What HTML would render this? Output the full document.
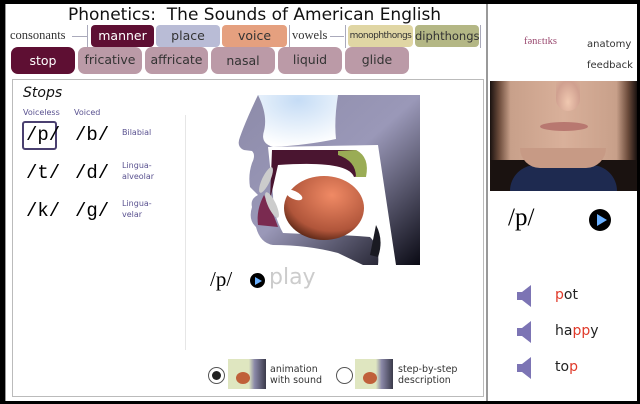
<!DOCTYPE html>
<html><head><style>
*{margin:0;padding:0;box-sizing:border-box}
body{width:640px;height:404px;background:#000;position:relative;overflow:hidden;font-family:"DejaVu Sans","Liberation Sans",sans-serif}
.a{position:absolute}
.btn{position:absolute;height:22px;border-radius:4px;text-align:center;line-height:22px;font-size:12.5px;color:#333}
.mono{font-family:"Liberation Mono",monospace}
.lab{font-size:8px;color:#5a5290;line-height:11px}
</style></head><body>
<div class="a" style="left:5px;top:4px;width:481px;height:397px;background:#fff;border-left:1px solid #999"></div>
<div class="a" style="left:486px;top:4px;width:2px;height:397px;background:#999"></div>
<div class="a" style="left:488px;top:4px;width:149px;height:397px;background:#fff"></div>
<div class="a" style="left:68px;top:5px;font-size:17px;color:#111;white-space:nowrap">Phonetics:&nbsp; The Sounds of American English</div>
<div class="a" style="left:10px;top:28px;font-family:'Liberation Serif',serif;font-size:12.5px;color:#333">consonants</div>
<div class="a" style="left:72px;top:36px;width:15px;height:1px;background:#aab"></div>
<div class="a" style="left:87px;top:25px;width:203px;height:23px;border:1px solid #aab;border-top:none;border-bottom:none"></div>
<div class="btn" style="left:91px;top:25px;width:63px;background:#5e0f33;color:#fff">manner</div>
<div class="btn" style="left:156px;top:25px;width:64px;background:#b9bcd6">place</div>
<div class="btn" style="left:222px;top:25px;width:65px;background:#e5a07f">voice</div>
<div class="a" style="left:292px;top:28px;font-family:'Liberation Serif',serif;font-size:12.5px;color:#333">vowels</div>
<div class="a" style="left:330px;top:36px;width:14px;height:1px;background:#aab"></div>
<div class="a" style="left:345px;top:25px;width:136px;height:23px;border:1px solid #aab;border-top:none;border-bottom:none"></div>
<div class="btn" style="left:348px;top:25px;width:65px;background:#e0d6a4;font-size:9px;letter-spacing:-.5px">monophthongs</div>
<div class="btn" style="left:415px;top:25px;width:64px;background:#b4b785;font-size:11.5px">diphthongs</div>
<div class="btn" style="left:11px;top:47px;width:64px;height:27px;line-height:27px;background:#5e0f33;color:#fff;border-radius:7px">stop</div>
<div class="btn" style="left:78px;top:47px;width:64px;height:27px;line-height:25px;background:#bb9aa7;border-radius:7px">fricative</div>
<div class="btn" style="left:145px;top:47px;width:63px;height:27px;line-height:25px;background:#bb9aa7;border-radius:7px">affricate</div>
<div class="btn" style="left:211px;top:47px;width:64px;height:27px;line-height:27px;background:#bb9aa7;border-radius:7px">nasal</div>
<div class="btn" style="left:278px;top:47px;width:64px;height:27px;line-height:25px;background:#bb9aa7;border-radius:7px">liquid</div>
<div class="btn" style="left:345px;top:47px;width:64px;height:27px;line-height:25px;background:#bb9aa7;border-radius:7px">glide</div>
<div class="a" style="left:12px;top:79px;width:472px;height:318px;border:1px solid #bbb"></div>
<div class="a" style="left:185px;top:115px;width:1px;height:235px;background:#e6e6e6"></div>
<div class="a" style="left:23px;top:85px;font-size:14px;font-style:italic;color:#111">Stops</div>
<div class="a lab" style="left:23px;top:107px">Voiceless</div>
<div class="a lab" style="left:74px;top:107px">Voiced</div>
<div class="a" style="left:22px;top:121px;width:35px;height:29px;border:2px solid #4a4070;border-radius:3px"></div>
<div class="a mono" style="left:26px;top:124px;font-size:19px">/p/</div>
<div class="a mono" style="left:75px;top:124px;font-size:19px">/b/</div>
<div class="a lab" style="left:122px;top:127px">Bilabial</div>
<div class="a mono" style="left:26px;top:162px;font-size:19px">/t/</div>
<div class="a mono" style="left:75px;top:162px;font-size:19px">/d/</div>
<div class="a lab" style="left:122px;top:160px">Lingua-<br>alveolar</div>
<div class="a mono" style="left:26px;top:200px;font-size:19px">/k/</div>
<div class="a mono" style="left:75px;top:200px;font-size:19px">/g/</div>
<div class="a lab" style="left:122px;top:198px">Lingua-<br>velar</div>
<svg class="a" style="left:228px;top:95px" width="192" height="170" viewBox="0 0 192 170">
<defs><linearGradient id="g1" x1="0" y1="0" x2="1" y2="1"><stop offset="0" stop-color="#8c8aa8"/><stop offset=".5" stop-color="#9a98b8"/><stop offset="1" stop-color="#0a0a14"/></linearGradient>
<radialGradient id="g2" cx=".6" cy=".3" r=".8"><stop offset="0" stop-color="#f08a65"/><stop offset=".7" stop-color="#b0553a"/><stop offset="1" stop-color="#3a1508"/></radialGradient>
<radialGradient id="g3" cx=".5" cy=".1" r=".9"><stop offset="0" stop-color="#c5dcf5"/><stop offset="1" stop-color="#fff"/></radialGradient></defs>
<rect width="192" height="170" fill="url(#g1)"/>
<path d="M0,0 L30,0 Q18,25 12,42 Q8,52 16,55 L24,56 Q28,60 24,68 Q20,80 22,92 L30,100 Q22,104 24,112 Q20,125 28,132 Q32,148 45,150 Q80,150 110,158 L135,170 L0,170 Z" fill="#fff"/>
<path d="M30,0 L110,0 Q106,25 108,44 Q80,50 45,52 Q32,48 36,36 Q40,20 30,0 Z" fill="url(#g3)"/>
<path d="M40,52 L150,50 L168,170 L150,170 Q152,152 142,142 Q120,140 100,140 L55,138 Q45,120 45,100 Z" fill="#fff"/>
<path d="M44,55 L128,55 Q140,62 138,80 L126,82 Q120,65 50,70 L42,105 Z" fill="#4a1530"/>
<path d="M110,56 L128,55 Q142,62 138,82 L128,82 Q128,66 110,60 Z" fill="#9aac55"/>
<ellipse cx="96" cy="113" rx="40" ry="32" fill="url(#g2)"/>
<path d="M30,130 Q28,115 36,100 Q46,120 50,132 Z" fill="#7a2a50"/>
<ellipse cx="38" cy="85" rx="4" ry="14" fill="#ccc" transform="rotate(25 38 85)"/>
<ellipse cx="44" cy="110" rx="4" ry="14" fill="#ccc" transform="rotate(-25 44 110)"/>
<ellipse cx="66" cy="100" rx="9" ry="4" fill="#fff" transform="rotate(25 66 100)"/>
<path d="M148,130 Q156,145 150,162 L142,160 Z" fill="#1a1a22"/>
</svg>
<div class="a" style="left:210px;top:267px;font-family:'Liberation Serif',serif;font-size:21px">/p/</div>
<div class="a" style="left:250px;top:273px;width:15px;height:15px;border-radius:50%;background:#000"></div>
<div class="a" style="left:255px;top:277px;width:0;height:0;border-left:7px solid #6ab0ff;border-top:4px solid transparent;border-bottom:4px solid transparent"></div>
<div class="a" style="left:269px;top:265px;font-size:22px;color:#ccc">play</div>
<div class="a" style="left:208px;top:367px;width:17px;height:17px;border-radius:50%;border:1px solid #555;background:#fff"></div>
<div class="a" style="left:212px;top:371px;width:9px;height:9px;border-radius:50%;background:#222"></div>
<div class="a" style="left:228px;top:359px;width:38px;height:30px;background:linear-gradient(90deg,#dfe6c0 55%,#8a88a8 70%,#3a3a4a)"></div>
<div class="a" style="left:236px;top:372px;width:14px;height:12px;border-radius:50%;background:#c0603a"></div>
<div class="a" style="left:270px;top:364px;font-size:9.5px;line-height:11px;color:#333">animation<br>with sound</div>
<div class="a" style="left:336px;top:367px;width:17px;height:17px;border-radius:50%;border:1px solid #555;background:#fff"></div>
<div class="a" style="left:355px;top:359px;width:38px;height:30px;background:linear-gradient(90deg,#dfe6c0 55%,#8a88a8 70%,#3a3a4a)"></div>
<div class="a" style="left:363px;top:372px;width:14px;height:12px;border-radius:50%;background:#c0603a"></div>
<div class="a" style="left:398px;top:364px;font-size:9.5px;line-height:11px;color:#333">step-by-step<br>description</div>
<div class="a" style="left:524px;top:36px;font-family:'Liberation Serif',serif;font-size:10.5px;color:#9a4a70">fənɛtɪks</div>
<div class="a" style="left:587px;top:39px;font-size:10px;color:#333">anatomy</div>
<div class="a" style="left:587px;top:60px;font-size:10px;color:#333">feedback</div>
<div class="a" style="left:490px;top:81px;width:147px;height:110px;background:linear-gradient(90deg,#1a1210 0%,#6a4a3a 6%,#c8a08a 14%,#d9b09a 50%,#c8a08a 86%,#6a4a3a 94%,#1a1210 100%)"></div>
<div class="a" style="left:556px;top:81px;width:24px;height:30px;background:radial-gradient(ellipse at 50% 70%,#f0c8b0,#d0a090 70%,transparent);border-radius:0 0 12px 12px"></div>
<div class="a" style="left:540px;top:122px;width:48px;height:9px;border-radius:50%;background:#b87870"></div>
<div class="a" style="left:490px;top:160px;width:147px;height:31px;background:#1a1210"></div>
<div class="a" style="left:510px;top:165px;width:107px;height:26px;background:#1e2a50;border-radius:40px 40px 0 0"></div>
<div class="a" style="left:520px;top:148px;width:86px;height:20px;border-radius:0 0 43px 43px;background:#c79a85"></div>
<div class="a" style="left:508px;top:204px;font-family:'Liberation Serif',serif;font-size:25px">/p/</div>
<div class="a" style="left:589px;top:209px;width:22px;height:22px;border-radius:50%;background:#000"></div>
<div class="a" style="left:597px;top:214px;width:0;height:0;border-left:10px solid #6ab0ff;border-top:6px solid transparent;border-bottom:6px solid transparent"></div>
<svg class="a" style="left:517px;top:284px" width="18" height="100" viewBox="0 0 18 100">
<g fill="#7c74b4"><path d="M0,8h5l9,-7v22l-9,-7h-5z"/><path d="M0,44h5l9,-7v22l-9,-7h-5z"/><path d="M0,80h5l9,-7v22l-9,-7h-5z"/></g></svg>
<div class="a" style="left:555px;top:287px;font-size:14px;color:#222"><span style="color:#e03a2a">p</span>ot</div>
<div class="a" style="left:555px;top:323px;font-size:14px;color:#222">ha<span style="color:#e03a2a">pp</span>y</div>
<div class="a" style="left:555px;top:359px;font-size:14px;color:#222">to<span style="color:#e03a2a">p</span></div>
</body></html>
